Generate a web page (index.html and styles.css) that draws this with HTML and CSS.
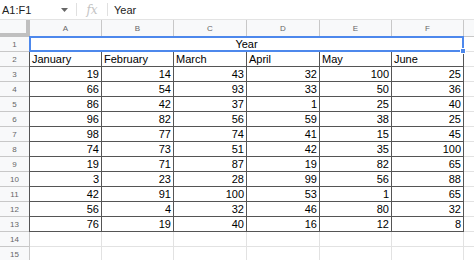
FILE: index.html
```html
<!DOCTYPE html>
<html>
<head>
<meta charset="utf-8">
<link rel="stylesheet" href="styles.css">
</head>
<body>
<div class="toolbar">
  <div class="namebox">A1:F1</div>
  <svg class="caret" width="7" height="4" viewBox="0 0 7 4"><path d="M0 0h7L3.5 4z" fill="#666"/></svg>
  <div class="sep"></div>
  <div class="fx">fx</div>
  <div class="sep"></div>
  <div class="formula">Year</div>
</div>
<div class="sheet">
  <div class="corner"></div>
  <div class="ch">A</div><div class="ch">B</div><div class="ch">C</div><div class="ch">D</div><div class="ch">E</div><div class="ch">F</div><div class="ch rest"></div>

  <div class="rh">1</div><div class="title">Year<span class="handle"></span></div><div class="cell rest"></div>

  <div class="rh">2</div><div class="cell d first">January</div><div class="cell d">February</div><div class="cell d">March</div><div class="cell d">April</div><div class="cell d">May</div><div class="cell d">June</div><div class="cell rest"></div>
  <div class="rh">3</div><div class="cell d num first">19</div><div class="cell d num">14</div><div class="cell d num">43</div><div class="cell d num">32</div><div class="cell d num">100</div><div class="cell d num">25</div><div class="cell rest"></div>
  <div class="rh">4</div><div class="cell d num first">66</div><div class="cell d num">54</div><div class="cell d num">93</div><div class="cell d num">33</div><div class="cell d num">50</div><div class="cell d num">36</div><div class="cell rest"></div>
  <div class="rh">5</div><div class="cell d num first">86</div><div class="cell d num">42</div><div class="cell d num">37</div><div class="cell d num">1</div><div class="cell d num">25</div><div class="cell d num">40</div><div class="cell rest"></div>
  <div class="rh">6</div><div class="cell d num first">96</div><div class="cell d num">82</div><div class="cell d num">56</div><div class="cell d num">59</div><div class="cell d num">38</div><div class="cell d num">25</div><div class="cell rest"></div>
  <div class="rh">7</div><div class="cell d num first">98</div><div class="cell d num">77</div><div class="cell d num">74</div><div class="cell d num">41</div><div class="cell d num">15</div><div class="cell d num">45</div><div class="cell rest"></div>
  <div class="rh">8</div><div class="cell d num first">74</div><div class="cell d num">73</div><div class="cell d num">51</div><div class="cell d num">42</div><div class="cell d num">35</div><div class="cell d num">100</div><div class="cell rest"></div>
  <div class="rh">9</div><div class="cell d num first">19</div><div class="cell d num">71</div><div class="cell d num">87</div><div class="cell d num">19</div><div class="cell d num">82</div><div class="cell d num">65</div><div class="cell rest"></div>
  <div class="rh">10</div><div class="cell d num first">3</div><div class="cell d num">23</div><div class="cell d num">28</div><div class="cell d num">99</div><div class="cell d num">56</div><div class="cell d num">88</div><div class="cell rest"></div>
  <div class="rh">11</div><div class="cell d num first">42</div><div class="cell d num">91</div><div class="cell d num">100</div><div class="cell d num">53</div><div class="cell d num">1</div><div class="cell d num">65</div><div class="cell rest"></div>
  <div class="rh">12</div><div class="cell d num first">56</div><div class="cell d num">4</div><div class="cell d num">32</div><div class="cell d num">46</div><div class="cell d num">80</div><div class="cell d num">32</div><div class="cell rest"></div>
  <div class="rh">13</div><div class="cell d num first">76</div><div class="cell d num">19</div><div class="cell d num">40</div><div class="cell d num">16</div><div class="cell d num">12</div><div class="cell d num">8</div><div class="cell rest"></div>

  <div class="rh">14</div><div class="cell"></div><div class="cell"></div><div class="cell"></div><div class="cell"></div><div class="cell"></div><div class="cell"></div><div class="cell rest"></div>
  <div class="rh">15</div><div class="cell"></div><div class="cell"></div><div class="cell"></div><div class="cell"></div><div class="cell"></div><div class="cell"></div><div class="cell rest"></div>
</div>
</body>
</html>
```
FILE: styles.css
```css
* { box-sizing: border-box; }
html, body { margin: 0; padding: 0; background: #fff; }
body { font-family: "Liberation Sans", Arial, sans-serif; width: 474px; height: 260px; overflow: hidden; }
.toolbar { height: 20px; display: flex; align-items: center; border-bottom: 1px solid #e3e3e3; font-size: 11px; color: #222; }
.namebox { width: 60px; padding-left: 2px; }
.caret { margin-left: 1px; margin-right: 8px; }
.sep { width: 1px; height: 13px; background: #e0e0e0; }
.fx { font-family: "DejaVu Serif", serif; font-style: italic; color: #c4c4c4; font-size: 12px; width: 30px; text-align: center; }
.formula { padding-left: 6px; }
.sheet { display: grid; grid-template-columns: 30px 72px 72px 73px 73px 72px 72px 1fr; grid-template-rows: 17px repeat(15, 15px); }
.corner { background: #f8f9fa; border-right: 4px solid #c0c0c0; border-bottom: 4px solid #c0c0c0; }
.ch, .rh { background: #f8f9fa; border-right: 1px solid #c8c8c8; border-bottom: 1px solid #c8c8c8; font-size: 8px; color: #666; display: flex; align-items: center; justify-content: center; }
.cell { border-right: 1px solid #e2e2e2; border-bottom: 1px solid #e2e2e2; font-size: 11px; color: #000; padding: 0 2px; display: flex; align-items: flex-end; line-height: 13px; overflow: hidden; white-space: nowrap; }
.cell.num { justify-content: flex-end; }
.cell.d { border-right-color: #555; border-bottom-color: #555; }
.cell.d.first { border-left: 1px solid #555; margin-left: -1px; }
.rest { border-right: none; }
.title { grid-column: 2 / 8; border: 2px solid #4d88ec; margin-top: -1px; margin-left: -1px; position: relative; font-size: 11px; display: flex; align-items: center; justify-content: center; color: #000; }
.handle { position: absolute; right: -4px; bottom: -4px; width: 6px; height: 6px; background: #4d88ec; border: 1px solid #fff; }
```
